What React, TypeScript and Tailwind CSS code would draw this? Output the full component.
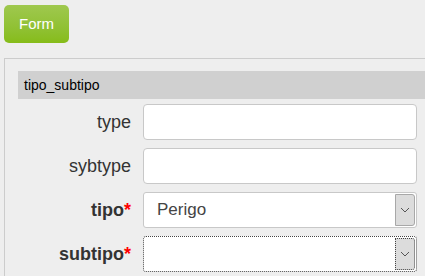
import React from 'react'

function Chevron() {
  return (
    <svg width="10" height="6" viewBox="0 0 10 6" className="block">
      <polyline points="1,1 5,5 9,1" fill="none" stroke="#555" strokeWidth="1" />
    </svg>
  )
}

function Row({ label, required, children }: { label: string; required?: boolean; children: React.ReactNode }) {
  return (
    <div className="flex items-center gap-[12px] mt-[8px] first:mt-[5px]">
      <label
        className={
          'w-[113px] text-right text-[18px] text-[#333] ' + (required ? 'font-bold' : '')
        }
      >
        {label}
        {required && <span className="text-[#f00] font-bold">*</span>}
      </label>
      {children}
    </div>
  )
}

function TextInput() {
  return <input className="w-[274px] h-[36px] rounded-[4px] border border-[#c8c8c8] bg-white outline-none" />
}

function Select({ value, focused }: { value: string; focused?: boolean }) {
  return (
    <div
      className={
        'w-[274px] h-[36px] rounded-[3px] bg-white flex items-stretch ' +
        (focused ? 'border border-dotted border-[#444]' : 'border border-[#c8c8c8]')
      }
    >
      <div className="flex-1 flex items-center pl-[13px] text-[17px] text-[#444]">{value}</div>
      <div
        className={
          'w-[20px] my-[1px] mr-[1px] flex items-center justify-center bg-[#dcdcdc] rounded-r-[3px] ' +
          (focused ? 'border border-dotted border-[#444]' : 'border border-[#a8a8a8]')
        }
      >
        <Chevron />
      </div>
    </div>
  )
}

export default function App() {
  return (
    <div className="w-[425px] h-[276px] overflow-hidden bg-[#eeeeee] font-['Liberation_Sans',Arial,sans-serif]">
      <div className="pt-[5px] pl-[4px]">
        <button className="w-[65px] h-[38px] rounded-[5px] bg-gradient-to-b from-[#9fc84e] to-[#86bc18] text-white text-[15px]">
          Form
        </button>
      </div>
      <div className="mt-[15px] ml-[4px] w-[480px] border border-[#cccccc] pt-[12px] pl-[13px] pb-[20px]">
        <div className="h-[28px] bg-[#d0d0d0] pl-[6px] text-[14px] leading-[28px] text-black">tipo_subtipo</div>
        <div>
          <Row label="type">
            <TextInput />
          </Row>
          <Row label="sybtype">
            <TextInput />
          </Row>
          <Row label="tipo" required>
            <Select value="Perigo" />
          </Row>
          <Row label="subtipo" required>
            <Select value="" focused />
          </Row>
        </div>
      </div>
    </div>
  )
}
